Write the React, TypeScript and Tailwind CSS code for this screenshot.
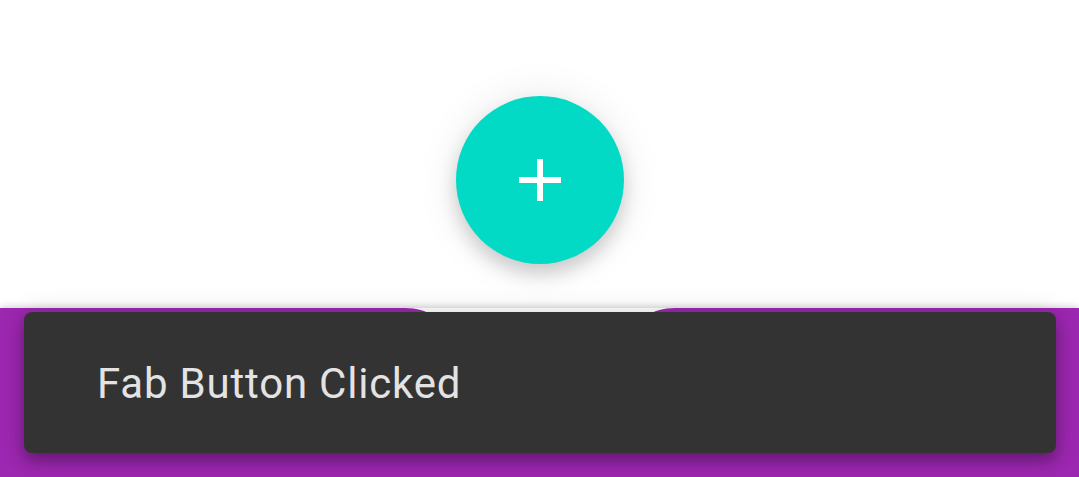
import React from "react";

export default function App() {
  return (
    <div className="relative w-[1079px] h-[477px] bg-white overflow-hidden" style={{ fontFamily: "Roboto, 'Noto Sans', sans-serif" }}>
      <div className="h-[308px] flex items-start justify-center pt-[96px]">
        <button className="w-[168px] h-[168px] rounded-full bg-[#03dac6] flex items-center justify-center shadow-[0_10px_18px_rgba(0,0,0,0.16),0_2px_40px_rgba(0,0,0,0.10)]">
          <svg width="42" height="42" viewBox="0 0 42 42">
            <rect x="18" y="0" width="6" height="42" fill="#fff" />
            <rect x="0" y="18" width="42" height="6" fill="#fff" />
          </svg>
        </button>
      </div>
      <div className="relative h-[169px] bg-[#9c27b0] shadow-[0_-2px_6px_rgba(0,0,0,0.15)]">
        <svg className="absolute left-[400px] top-0" width="280" height="6" viewBox="0 0 280 6">
          <path d="M0 0 C 14 0, 22 1, 30 6 L 250 6 C 258 1, 266 0, 280 0 Z" fill="#ffffff" />
        </svg>
      </div>
      <div className="absolute left-[24px] right-[23px] top-[312px] h-[141px] rounded-lg bg-[#333333] flex items-center pl-[73px] pt-[3px] shadow-[0_8px_14px_rgba(0,0,0,0.28),0_2px_28px_rgba(0,0,0,0.14)]">
        <span className="text-[42px] leading-none text-[#e3e3e3] tracking-[0.8px]">Fab Button Clicked</span>
      </div>
    </div>
  );
}
